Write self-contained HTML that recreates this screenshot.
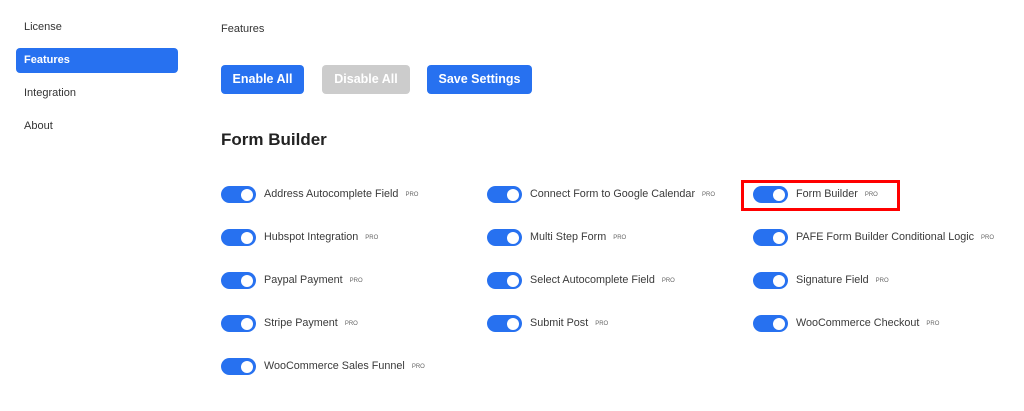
<!DOCTYPE html><html><head><style>
body{margin:0;width:1024px;height:411px;background:#fff;font-family:"Liberation Sans",sans-serif;color:#333;position:relative;overflow:hidden}
.a{position:absolute;white-space:nowrap}
.nav{font-size:11px;color:#333;left:24px}
.sel{left:16px;top:48px;width:162px;height:25px;background:#2771f0;border-radius:4px}
.btn{position:absolute;top:65px;height:29px;border-radius:4px;background:#2771f0;color:#fff;font-weight:bold;font-size:12.5px;line-height:29px;text-align:center}
.t{position:absolute;width:35px;height:17px;border-radius:9px;background:#2771f0}
.t::after{content:"";position:absolute;right:3px;top:2.5px;width:12px;height:12px;border-radius:50%;background:#fff}
.l{position:absolute;font-size:10.8px;color:#3a3a3a;white-space:nowrap}
.l b{font-size:6px;color:#666;font-weight:normal;margin-left:7px;vertical-align:1px}
</style></head><body>
<div class="a nav" style="top:21px">License</div>
<div class="a sel"></div>
<div class="a nav" style="top:54px;color:#fff;font-weight:bold">Features</div>
<div class="a nav" style="top:87px">Integration</div>
<div class="a nav" style="top:120px">About</div>
<div class="a" style="left:221px;top:23px;font-size:11px">Features</div>
<div class="btn" style="left:221px;width:83px">Enable All</div>
<div class="btn" style="left:322px;width:88px;background:#ccc">Disable All</div>
<div class="btn" style="left:427px;width:105px">Save Settings</div>
<div class="a" style="left:221px;top:130px;font-size:17px;font-weight:bold;color:#222">Form Builder</div>
<div class="a" style="left:741px;top:180px;width:153px;height:25px;border:3px solid #f00"></div>
<div id="g"></div>
<script>
var items=[["Address Autocomplete Field","Connect Form to Google Calendar","Form Builder"],["Hubspot Integration","Multi Step Form","PAFE Form Builder Conditional Logic"],["Paypal Payment","Select Autocomplete Field","Signature Field"],["Stripe Payment","Submit Post","WooCommerce Checkout"],["WooCommerce Sales Funnel"]];
var cols=[221,487,753],h="";
items.forEach(function(r,i){var y=195+43*i;r.forEach(function(n,j){var x=cols[j];
h+='<div class="t" style="left:'+x+'px;top:'+(y-9)+'px"></div><div class="l" style="left:'+(x+43)+'px;top:'+(y-7)+'px">'+n+'<b>PRO</b></div>';});});
document.getElementById("g").innerHTML=h;
</script>
</body></html>
